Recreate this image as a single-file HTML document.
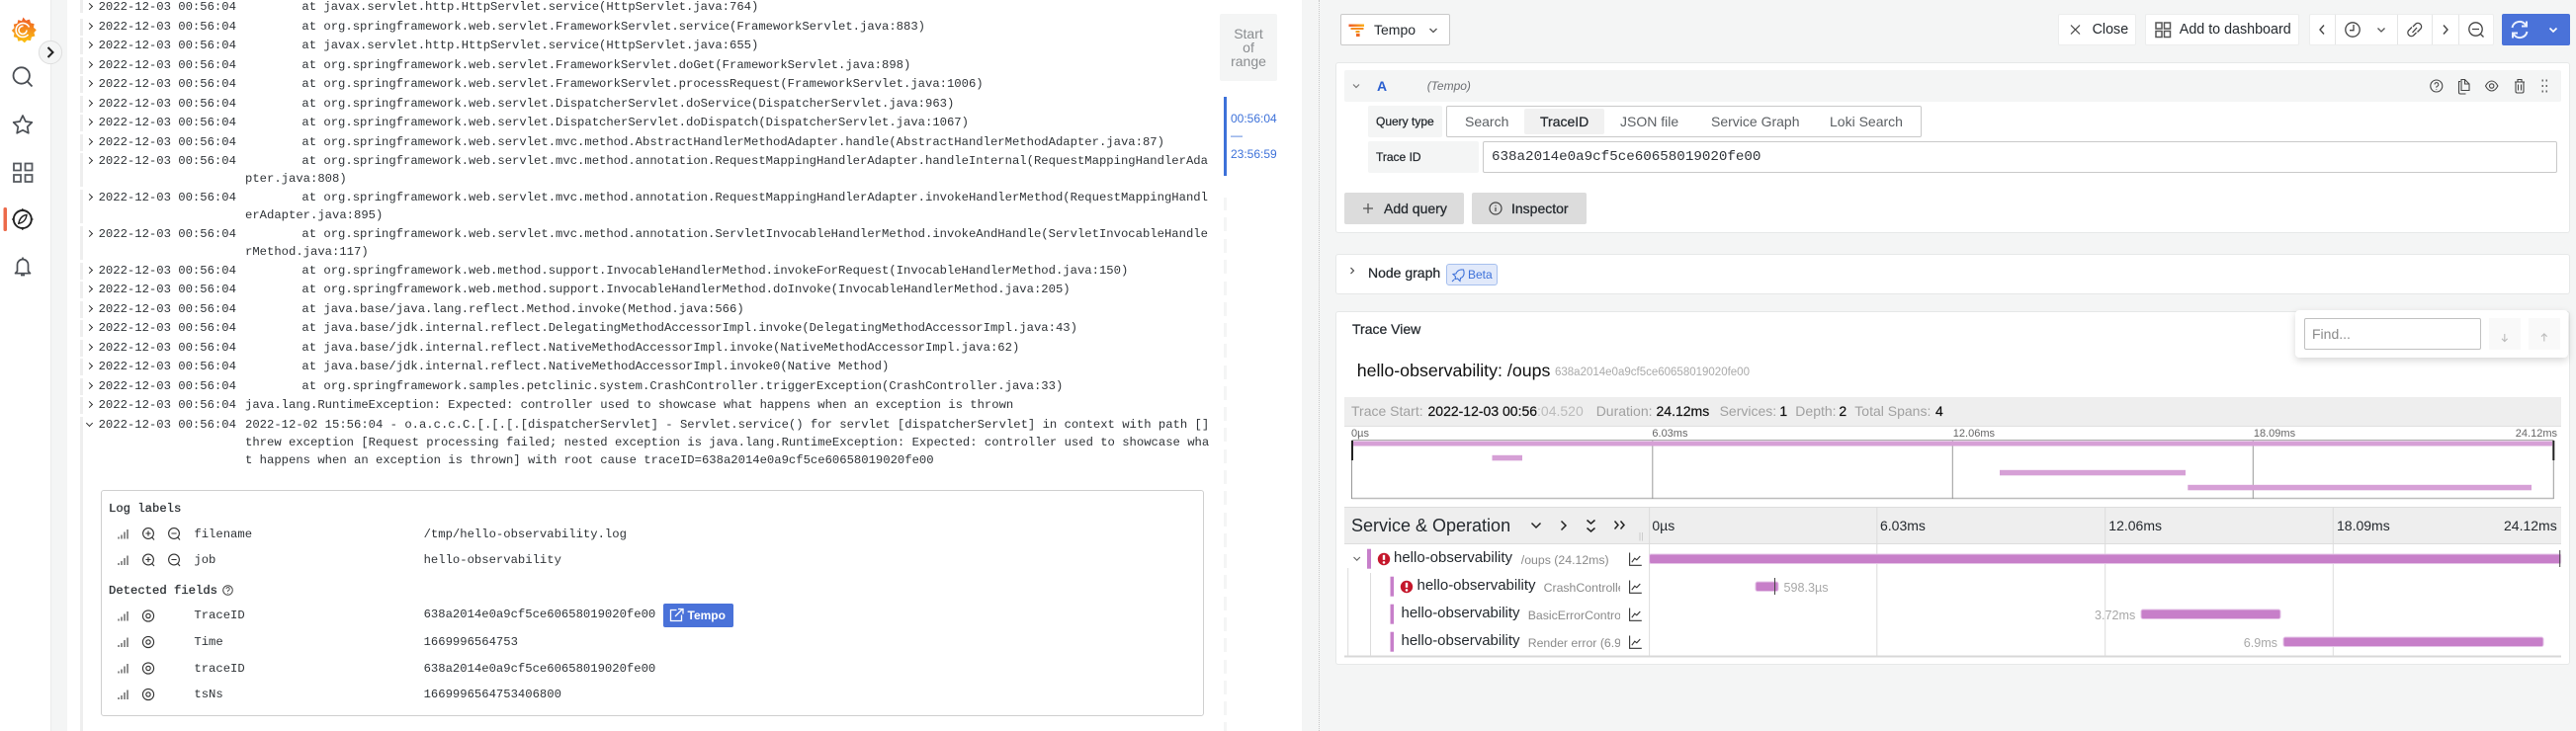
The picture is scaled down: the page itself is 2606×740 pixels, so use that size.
<!DOCTYPE html>
<html><head><meta charset="utf-8"><title>Explore</title>
<style>
html,body{margin:0;padding:0;background:#f4f5f5}
#p{position:relative;width:2606px;height:740px;overflow:hidden;background:#f4f5f5;font-family:"Liberation Sans",sans-serif;color:#24292e}
#p div{position:absolute;box-sizing:border-box}
.r{left:0;height:18px;width:1220px;font:12.22px/18px "Liberation Mono",monospace;color:#2f3337;white-space:pre}
.r span{position:absolute;top:0}
.r .bar{left:81px;top:1px;width:3px;height:17px;background:#eee}
.r .ch{left:87.5px;top:6px;width:5px;height:5px;border-top:1.3px solid #333;border-right:1.3px solid #333;transform:rotate(45deg);box-sizing:border-box}
.r .ts{left:99.6px}
.r .at{left:305.4px}
.r .m{left:248px}
.r .n{left:248px;top:18px}
.r .o{left:248px;top:36px}
.l{font:12.22px/18px "Liberation Mono",monospace;color:#2f3337;white-space:pre;height:18px}
.k{left:196.4px}.v{left:428.6px}
.h{-webkit-text-stroke:.3px #2f3337;left:110px}
.t{white-space:nowrap;line-height:20px;height:20px;font-size:14px}
.md{-webkit-text-stroke:.25px currentColor}
.g{color:#5b5f63}
.btn{background:#fff;border:1px solid #eceded;border-radius:2px;top:14px;height:32px}
.pan{background:#fff;border:1px solid #e6e8e8;border-radius:3px;left:1351px;width:1249px}
.lab{background:#f4f5f5;border-radius:2px;top:107px;height:32px}
.sn{color:#24292e;font-size:15px}
.op{color:#8a8a8a;font-size:12.3px;overflow:hidden;width:auto}
.st{color:#a0a0a0}
.sv{color:#111;-webkit-text-stroke:.2px #111}
.tk{color:#666;font-size:11px}
.tl{color:#24292e;font-size:14px}
.du{color:#a8a8a8;font-size:12.6px}
svg{position:absolute;left:0;top:0}
</style></head><body><div id="p">
<div style="left:0;top:0;width:51px;height:740px;background:#fff"></div>
<div style="left:51px;top:0;width:17px;height:740px;background:#f4f5f5;border-left:1px solid #eaebeb"></div>
<div style="left:68px;top:0;width:1249px;height:740px;background:#fff"></div>
<div style="left:1334px;top:0;width:1px;height:740px;border-left:1px dotted #c8c8c8"></div>

<!-- log rows -->
<div class="r" style="top:-2px"><span class="bar" style="top:0;height:15px"></span><span class="ch"></span><span class="ts">2022-12-03 00:56:04</span><span class="at">at javax.servlet.http.HttpServlet.service(HttpServlet.java:764)</span></div>
<div class="r" style="top:17.5px"><span class="bar"></span><span class="ch"></span><span class="ts">2022-12-03 00:56:04</span><span class="at">at org.springframework.web.servlet.FrameworkServlet.service(FrameworkServlet.java:883)</span></div>
<div class="r" style="top:37px"><span class="bar"></span><span class="ch"></span><span class="ts">2022-12-03 00:56:04</span><span class="at">at javax.servlet.http.HttpServlet.service(HttpServlet.java:655)</span></div>
<div class="r" style="top:56.5px"><span class="bar"></span><span class="ch"></span><span class="ts">2022-12-03 00:56:04</span><span class="at">at org.springframework.web.servlet.FrameworkServlet.doGet(FrameworkServlet.java:898)</span></div>
<div class="r" style="top:76px"><span class="bar"></span><span class="ch"></span><span class="ts">2022-12-03 00:56:04</span><span class="at">at org.springframework.web.servlet.FrameworkServlet.processRequest(FrameworkServlet.java:1006)</span></div>
<div class="r" style="top:95.5px"><span class="bar"></span><span class="ch"></span><span class="ts">2022-12-03 00:56:04</span><span class="at">at org.springframework.web.servlet.DispatcherServlet.doService(DispatcherServlet.java:963)</span></div>
<div class="r" style="top:115px"><span class="bar"></span><span class="ch"></span><span class="ts">2022-12-03 00:56:04</span><span class="at">at org.springframework.web.servlet.DispatcherServlet.doDispatch(DispatcherServlet.java:1067)</span></div>
<div class="r" style="top:134.5px"><span class="bar"></span><span class="ch"></span><span class="ts">2022-12-03 00:56:04</span><span class="at">at org.springframework.web.servlet.mvc.method.AbstractHandlerMethodAdapter.handle(AbstractHandlerMethodAdapter.java:87)</span></div>
<div class="r" style="top:154px"><span class="bar" style="height:34px"></span><span class="ch"></span><span class="ts">2022-12-03 00:56:04</span><span class="at">at org.springframework.web.servlet.mvc.method.annotation.RequestMappingHandlerAdapter.handleInternal(RequestMappingHandlerAda</span><span class="n">pter.java:808)</span></div>
<div class="r" style="top:191px"><span class="bar" style="height:34px"></span><span class="ch"></span><span class="ts">2022-12-03 00:56:04</span><span class="at">at org.springframework.web.servlet.mvc.method.annotation.RequestMappingHandlerAdapter.invokeHandlerMethod(RequestMappingHandl</span><span class="n">erAdapter.java:895)</span></div>
<div class="r" style="top:228px"><span class="bar" style="height:34px"></span><span class="ch"></span><span class="ts">2022-12-03 00:56:04</span><span class="at">at org.springframework.web.servlet.mvc.method.annotation.ServletInvocableHandlerMethod.invokeAndHandle(ServletInvocableHandle</span><span class="n">rMethod.java:117)</span></div>
<div class="r" style="top:264.7px"><span class="bar"></span><span class="ch"></span><span class="ts">2022-12-03 00:56:04</span><span class="at">at org.springframework.web.method.support.InvocableHandlerMethod.invokeForRequest(InvocableHandlerMethod.java:150)</span></div>
<div class="r" style="top:284.2px"><span class="bar"></span><span class="ch"></span><span class="ts">2022-12-03 00:56:04</span><span class="at">at org.springframework.web.method.support.InvocableHandlerMethod.doInvoke(InvocableHandlerMethod.java:205)</span></div>
<div class="r" style="top:303.7px"><span class="bar"></span><span class="ch"></span><span class="ts">2022-12-03 00:56:04</span><span class="at">at java.base/java.lang.reflect.Method.invoke(Method.java:566)</span></div>
<div class="r" style="top:323.2px"><span class="bar"></span><span class="ch"></span><span class="ts">2022-12-03 00:56:04</span><span class="at">at java.base/jdk.internal.reflect.DelegatingMethodAccessorImpl.invoke(DelegatingMethodAccessorImpl.java:43)</span></div>
<div class="r" style="top:342.7px"><span class="bar"></span><span class="ch"></span><span class="ts">2022-12-03 00:56:04</span><span class="at">at java.base/jdk.internal.reflect.NativeMethodAccessorImpl.invoke(NativeMethodAccessorImpl.java:62)</span></div>
<div class="r" style="top:362.2px"><span class="bar"></span><span class="ch"></span><span class="ts">2022-12-03 00:56:04</span><span class="at">at java.base/jdk.internal.reflect.NativeMethodAccessorImpl.invoke0(Native Method)</span></div>
<div class="r" style="top:381.7px"><span class="bar"></span><span class="ch"></span><span class="ts">2022-12-03 00:56:04</span><span class="at">at org.springframework.samples.petclinic.system.CrashController.triggerException(CrashController.java:33)</span></div>
<div class="r" style="top:401.2px"><span class="bar"></span><span class="ch"></span><span class="ts">2022-12-03 00:56:04</span><span class="m">java.lang.RuntimeException: Expected: controller used to showcase what happens when an exception is thrown</span></div>
<div class="r" style="top:420.7px"><span class="bar" style="height:320px"></span><span class="ch" style="transform:rotate(135deg);left:88px;top:5px"></span><span class="ts">2022-12-03 00:56:04</span><span class="m">2022-12-02 15:56:04 - o.a.c.c.C.[.[.[.[dispatcherServlet] - Servlet.service() for servlet [dispatcherServlet] in context with path []</span><span class="n">threw exception [Request processing failed; nested exception is java.lang.RuntimeException: Expected: controller used to showcase wha</span><span class="o">t happens when an exception is thrown] with root cause traceID=638a2014e0a9cf5ce60658019020fe00</span></div>

<!-- log detail box -->
<div style="left:101.5px;top:495.5px;width:1116px;height:229px;border:1.5px solid #cfcfcf;border-radius:3px;background:#fff"></div>
<div class="l h" style="top:505.5px">Log labels</div>
<div class="l k" style="top:531.5px">filename</div><div class="l v" style="top:531.5px">/tmp/hello-observability.log</div>
<div class="l k" style="top:558px">job</div><div class="l v" style="top:558px">hello-observability</div>
<div class="l h" style="top:588.5px">Detected fields</div>
<div class="l k" style="top:614px">TraceID</div><div class="l v" style="top:612.5px">638a2014e0a9cf5ce60658019020fe00</div>
<div class="l k" style="top:641px">Time</div><div class="l v" style="top:641px">1669996564753</div>
<div class="l k" style="top:667.5px">traceID</div><div class="l v" style="top:667.5px">638a2014e0a9cf5ce60658019020fe00</div>
<div class="l k" style="top:694px">tsNs</div><div class="l v" style="top:694px">1669996564753406800</div>
<div style="left:671px;top:611px;width:71px;height:24px;background:#4a72d9;border-radius:2px"></div>
<div class="t" style="left:695.5px;top:613px;color:#fff;font-size:12px;font-weight:bold">Tempo</div>

<!-- range -->
<div style="left:1234px;top:14px;width:58px;height:68px;background:#f4f5f5;border-radius:2px"></div>
<div class="t g" style="left:1234px;width:58px;text-align:center;top:24px;color:#8a8d90">Start</div>
<div class="t g" style="left:1234px;width:58px;text-align:center;top:38px;color:#8a8d90">of</div>
<div class="t g" style="left:1234px;width:58px;text-align:center;top:52px;color:#8a8d90">range</div>
<div style="left:1238px;top:98px;width:3px;height:80px;background:#3d71d9"></div>
<div class="t" style="left:1245px;top:110px;font-size:12px;color:#3d71d9">00:56:04</div>
<div class="t" style="left:1245px;top:127px;font-size:12px;color:#3d71d9">—</div>
<div class="t" style="left:1245px;top:146px;font-size:12px;color:#3d71d9">23:56:59</div>

<!-- right toolbar -->
<div class="btn" style="left:1355.5px;width:111px;border-color:#c9c9c9"></div>
<div class="t" style="left:1390px;top:20px">Tempo</div>
<div class="btn" style="left:2082px;width:79px"></div>
<div class="t" style="left:2116.6px;top:20px;font-size:14.3px">Close</div>
<div class="btn" style="left:2170px;width:156px"></div>
<div class="t" style="left:2204.8px;top:20px;font-size:14.3px">Add to dashboard</div>
<div class="btn" style="left:2335.5px;width:187px"></div>
<div style="left:2531px;top:14px;width:69px;height:32px;background:#4a72d9;border-radius:2px"></div>

<!-- query panel -->
<div class="pan" style="top:62.5px;height:173px"></div>
<div style="left:1360px;top:71px;width:1231px;height:32px;background:#f4f5f5;border-radius:2px"></div>
<div class="t" style="left:1393px;top:77px;color:#2a5fd0;font-weight:bold">A</div>
<div class="t" style="left:1443.7px;top:77px;font-size:12px;font-style:italic;color:#6c6f73">(Tempo)</div>
<div class="lab" style="left:1384px;width:75px"></div>
<div class="t md" style="left:1392px;top:113px;font-size:12px">Query type</div>
<div style="left:1463px;top:107px;width:481px;height:32px;border:1px solid #c9c9c9;border-radius:2px;background:#fff"></div>
<div style="left:1542px;top:110px;width:81px;height:26px;background:#f1f1f1;border-radius:2px"></div>
<div class="t g" style="left:1482px;top:113px">Search</div>
<div class="t md" style="left:1558px;top:113px">TraceID</div>
<div class="t g" style="left:1639px;top:113px">JSON file</div>
<div class="t g" style="left:1731px;top:113px">Service Graph</div>
<div class="t g" style="left:1851px;top:113px">Loki Search</div>
<div class="lab" style="left:1384px;width:112px;top:143px"></div>
<div class="t md" style="left:1392px;top:149px;font-size:12px">Trace ID</div>
<div style="left:1500px;top:143px;width:1087px;height:32px;border:1px solid #c9c9c9;border-radius:2px;background:#fff"></div>
<div class="t" style="left:1509px;top:149px;font:14.2px/20px 'Liberation Mono',monospace;color:#2f3337">638a2014e0a9cf5ce60658019020fe00</div>
<div style="left:1360px;top:195px;width:121px;height:32px;background:#dcdcdc;border-radius:2px"></div>
<div class="t md" style="left:1400px;top:201px">Add query</div>
<div style="left:1489px;top:195px;width:116px;height:32px;background:#dcdcdc;border-radius:2px"></div>
<div class="t md" style="left:1529px;top:201px">Inspector</div>

<!-- node graph -->
<div class="pan" style="top:257px;height:40.5px"></div>
<div class="t md" style="left:1384px;top:266px">Node graph</div>
<div style="left:1462.5px;top:267px;width:52px;height:22px;background:#e1e9fa;border:1px solid #a6bfee;border-radius:3px"></div>
<div class="t" style="left:1485px;top:268px;font-size:12px;color:#3d71d9">Beta</div>

<!-- trace view -->
<div class="pan" style="top:314.5px;height:358px"></div>
<div class="t md" style="left:1368px;top:323px">Trace View</div>
<div class="t" style="left:1372.7px;top:365px;font-size:17.8px;color:#111">hello-observability: /oups</div>
<div class="t" style="left:1573px;top:367px;font-size:11.5px;color:#aaa">638a2014e0a9cf5ce60658019020fe00</div>
<div style="left:1360px;top:402px;width:1231px;height:29.5px;background:#eee;border-bottom:1px solid #e0e0e0"></div>
<div class="t st" style="left:1367px;top:406px">Trace Start:</div>
<div class="t sv" style="left:1444.5px;top:406px">2022-12-03 00:56<span style="color:#bbb;-webkit-text-stroke:0">:04.520</span></div>
<div class="t st" style="left:1614.7px;top:406px">Duration:</div>
<div class="t sv" style="left:1675.5px;top:406px">24.12ms</div>
<div class="t st" style="left:1739.6px;top:406px">Services:</div>
<div class="t sv" style="left:1800.4px;top:406px">1</div>
<div class="t st" style="left:1816.3px;top:406px">Depth:</div>
<div class="t sv" style="left:1860.4px;top:406px">2</div>
<div class="t st" style="left:1876.3px;top:406px">Total Spans:</div>
<div class="t sv" style="left:1958px;top:406px">4</div>
<div class="t tk" style="left:1367px;top:429px">0µs</div>
<div class="t tk" style="left:1671.4px;top:429px">6.03ms</div>
<div class="t tk" style="left:1975.8px;top:429px">12.06ms</div>
<div class="t tk" style="left:2279.9px;top:429px">18.09ms</div>
<div class="t tk" style="left:2544.8px;top:429px">24.12ms</div>
<div style="left:1360px;top:512.5px;width:1231px;height:38.5px;background:#eee;border-top:1.5px solid #ddd;border-bottom:1.5px solid #ddd"></div>
<div class="t" style="left:1367px;top:522px;font-size:18px;color:#24292e">Service &amp; Operation</div>
<div class="t tl" style="left:1671.4px;top:522px">0µs</div>
<div class="t tl" style="left:1902px;top:522px">6.03ms</div>
<div class="t tl" style="left:2133.3px;top:522px">12.06ms</div>
<div class="t tl" style="left:2364px;top:522px">18.09ms</div>
<div class="t tl" style="left:2533px;top:522px">24.12ms</div>

<div class="t sn" style="left:1410px;top:555px">hello-observability</div>
<div class="t op" style="left:1538.8px;top:556.5px;width:100px">/oups (24.12ms)</div>
<div class="t sn" style="left:1433.5px;top:583px">hello-observability</div>
<div class="t op" style="left:1561.6px;top:584.5px;width:77px">CrashController.triggerException</div>
<div class="t sn" style="left:1417.5px;top:611px">hello-observability</div>
<div class="t op" style="left:1545.7px;top:612.5px;width:93px">BasicErrorController.error</div>
<div class="t sn" style="left:1417.5px;top:639px">hello-observability</div>
<div class="t op" style="left:1545.7px;top:640.5px;width:93px">Render error (6.9ms)</div>
<div class="t du" style="left:1804.5px;top:585px">598.3µs</div>
<div class="t du" style="left:2119px;top:613px">3.72ms</div>
<div class="t du" style="left:2269.7px;top:641px">6.9ms</div>

<!-- find -->
<div style="left:2322px;top:314px;width:276px;height:48px;background:#fff;border-radius:4px;box-shadow:0 3px 8px rgba(0,0,0,.16)"></div>
<div style="left:2330.5px;top:322px;width:179px;height:31.5px;background:#fff;border:1px solid #c0c0c0;border-radius:2px"></div>
<div class="t" style="left:2339px;top:327.5px;color:#8a8a8a">Find...</div>
<div style="left:2518px;top:322px;width:32px;height:32px;background:#f9f9f9"></div>
<div style="left:2558px;top:322px;width:32px;height:32px;background:#f9f9f9"></div>

<svg width="2606" height="740" viewBox="0 0 2606 740" fill="none">
<defs>
<linearGradient id="gl" x1="0" y1="0" x2="0" y2="1"><stop offset="0" stop-color="#ef5a28"/><stop offset="1" stop-color="#fbc40f"/></linearGradient>
<linearGradient id="tg" x1="0" y1="0" x2="1" y2="0"><stop offset="0" stop-color="#ef5a28"/><stop offset="1" stop-color="#fbb01a"/></linearGradient>
<g id="st"><path d="M-4.5 4.5v-2M-1.5 4.5v-4M1.5 4.5v-7M4.5 4.5v-9.5" stroke="#555" stroke-width="1.3"/></g>
<g id="zi"><circle cx="0" cy="-.5" r="5.4" stroke="#333" stroke-width="1.1"/><path d="M3.8 3.5l2.2 2.5M-2.6-.5h5.2M0-3.1v5.2" stroke="#333" stroke-width="1.1"/></g>
<g id="zo"><circle cx="0" cy="-.5" r="5.4" stroke="#333" stroke-width="1.1"/><path d="M3.8 3.5l2.2 2.5M-2.6-.5h5.2" stroke="#333" stroke-width="1.1"/></g>
<g id="ey"><circle r="5.6" stroke="#333" stroke-width="1.1"/><circle r="2.2" stroke="#333" stroke-width="1.1"/></g>
<g id="sp"><path d="M-5.7-6.5V6.3H6.5" stroke="#333" stroke-width="1.1"/><path d="M-3.5 3.2L-.5-.8L1.5.8L5-3" stroke="#333" stroke-width="1.1"/></g>
<g id="er"><circle r="6.2" fill="#c4162a"/><path d="M0-4.2V.8" stroke="#fff" stroke-width="2.4"/><circle cy="3.4" r="1.3" fill="#fff"/></g>
</defs>

<!-- sidebar -->
<path d="M23.5 17.5l2.6 3.3 3.9-1.2 1 3.7 3.6.8-.6 3.8 2.8 2.4-2.4 2.8 1 3.4-3.5 1-.9 3.6-3.6-.5-2.6 2.8-2.8-2.5-3.6.9-1-3.5-3.6-1.1.7-3.600-2.700-2.700 2.700-2.600-.7-3.700 3.700-.9.900-3.600 3.600 1.100z" fill="url(#gl)"/>
<path d="M29.500 27.500a7 7 0 1 0-1 7.500M27 30.500a4 4 0 1 1-3.500-4" stroke="#fff" stroke-width="1.6" fill="none"/>
<circle cx="51" cy="53" r="11.6" fill="#f4f5f5" stroke="#dedede"/>
<path d="M48.5 48l5 5-5 5" stroke="#222" stroke-width="2"/>
<circle cx="21.7" cy="76.5" r="8.2" stroke="#4a4e54" stroke-width="1.8"/><path d="M27.7 82.5l4.8 5" stroke="#4a4e54" stroke-width="1.8"/>
<path d="M23 117l2.9 6 6.4.9-4.6 4.5 1.1 6.4-5.8-3-5.8 3 1.1-6.4-4.6-4.5 6.4-.9z" stroke="#4a4e54" stroke-width="1.7" stroke-linejoin="round"/>
<path d="M14 165.500h7v7h-7zM25.500 165.500h7v7h-7zM14 177h7v7h-7zM25.500 177h7v7h-7z" stroke="#55595f" stroke-width="1.8"/>
<rect x="3.5" y="210" width="3.5" height="24" rx="1.5" fill="#ec6a4a"/>
<circle cx="22.8" cy="222" r="9" stroke="#222" stroke-width="1.9"/>
<path d="M27 217.500c-4 .5-7 3-8.200 8.800c4.600-.9 7.400-3.200 8.200-8.800z" stroke="#222" stroke-width="1.4"/>
<path d="M22.800 211v2M22.800 231v2M12 222h2M31.500 222h2" stroke="#222" stroke-width="1.2"/>
<path d="M17.500 274.500v-6.500a5.500 5.500 0 0 1 11 0v6.500l2 2.200h-15z" stroke="#4a4e54" stroke-width="1.7" stroke-linejoin="round"/><path d="M23 260.500v2M21 278.500h4" stroke="#4a4e54" stroke-width="1.7"/>

<!-- log dashed -->
<path d="M1239.500 200v13M1239.500 220v14M1239.500 242v14M1239.500 263v14M1239.500 285v14M1239.500 306v14M1239.500 327v14M1239.500 348v14M1239.500 370v14M1239.500 391v14M1239.500 412v14M1239.500 433v14M1239.500 455v14M1239.500 476v14M1239.500 497v14M1239.500 519v14M1239.500 540v14M1239.500 561v14M1239.500 582v14M1239.500 604v14M1239.500 625v14M1239.500 646v14M1239.500 668v14M1239.500 689v14M1239.500 710v14M1239.500 731v9" stroke="#f4f5f5" stroke-width="3"/>

<!-- log details icons -->
<use href="#st" x="124.5" y="541"/><use href="#zi" x="150" y="540.5"/><use href="#zo" x="176" y="540.5"/>
<use href="#st" x="124.5" y="567.5"/><use href="#zi" x="150" y="567"/><use href="#zo" x="176" y="567"/>
<circle cx="230.5" cy="597.500" r="4.8" stroke="#444" stroke-width="1"/><path d="M229 596.200a1.600 1.600 0 1 1 2 1.500l-.5.6v.7M230.500 600v.6" stroke="#444" stroke-width=".9"/>
<use href="#st" x="124.5" y="624"/><use href="#ey" x="150" y="623.5"/>
<use href="#st" x="124.5" y="650.5"/><use href="#ey" x="150" y="650"/>
<use href="#st" x="124.5" y="677"/><use href="#ey" x="150" y="676.5"/>
<use href="#st" x="124.5" y="703.5"/><use href="#ey" x="150" y="703"/>
<path d="M684.500 617.500h-6v11h11v-6M683 624l7.500-7.500M686 616.500h5v5" stroke="#fff" stroke-width="1.3"/>

<!-- top toolbar icons -->
<rect x="1364.500" y="24.500" width="15.500" height="2.500" fill="url(#tg)"/><rect x="1366.500" y="28" width="13" height="2" fill="#f68c20"/><rect x="1371.500" y="31" width="4" height="2.200" fill="#f4a01e"/><rect x="1372" y="34" width="3.600" height="3" fill="#ee6a26"/>
<path d="M1446.500 29l3.500 3.500 3.500-3.500" stroke="#555" stroke-width="1.3"/>
<path d="M2095 25.500l9 9M2104 25.500l-9 9" stroke="#444" stroke-width="1.2"/>
<path d="M2181 23h6v6h-6zM2189.500 23h6v6h-6zM2181 31.500h6v6h-6zM2189.500 31.500h6v6h-6z" stroke="#555" stroke-width="1.5"/>
<path d="M2362.500 15v30M2425.500 15v30M2460.500 15v30M2487.500 15v30" stroke="#e4e5e5" stroke-width="1"/>
<path d="M2351 25.500l-4 4.500 4 4.500M2472 25.500l4 4.500-4 4.500" stroke="#444" stroke-width="1.4"/>
<circle cx="2380" cy="30" r="7.200" stroke="#444" stroke-width="1.300"/><path d="M2381 25v5.700h-4" stroke="#444" stroke-width="1.300"/>
<path d="M2405.500 28.500l3.500 3.500 3.500-3.500" stroke="#555" stroke-width="1.300"/>
<path d="M2441 27l3-3a3.600 3.600 0 0 1 5 5l-3.500 3.500M2444.500 33l-3 3a3.600 3.600 0 0 1-5-5l3.500-3.500M2440.500 33l4.500-5" stroke="#444" stroke-width="1.300"/>
<circle cx="2504.500" cy="29.500" r="6.700" stroke="#444" stroke-width="1.300"/><path d="M2509.500 34.500l3 3M2501 29.500h7" stroke="#444" stroke-width="1.300"/>
<path d="M2541.500 28a7.500 7.500 0 0 1 13-3.500l1.500 1.500M2556 21.500v5h-5M2556.500 32a7.500 7.500 0 0 1-13 3.500l-1.500-1.500M2542 38.500v-5h5" stroke="#eaf0ff" stroke-width="2"/>
<path d="M2579.500 28.500l3.500 3.500 3.500-3.500" stroke="#fff" stroke-width="1.600"/>

<!-- query row -->
<path d="M1369 85.500l3 3 3-3" stroke="#777" stroke-width="1.200"/>
<circle cx="2464.800" cy="87" r="6" stroke="#444" stroke-width="1.100"/><path d="M2463 85.500a1.900 1.900 0 1 1 2.500 1.800l-.7.7v.8M2464.800 90v.8" stroke="#444" stroke-width="1"/>
<path d="M2489 82.500h-1.500v11a1.500 1.500 0 0 0 1.500 1.500h5.500M2490 80.500h3.500l4.500 4.500v6.500h-8zM2493.500 80.500v4.500h4.500" stroke="#444" stroke-width="1.100"/>
<path d="M2514.500 87c2-3.800 4-5 6.200-5s4.200 1.200 6.200 5c-2 3.800-4 5-6.200 5s-4.200-1.200-6.200-5z" stroke="#444" stroke-width="1.100"/><circle cx="2520.700" cy="87" r="2.200" stroke="#444" stroke-width="1.100"/>
<path d="M2544 83h10M2545 83v9.500a1.500 1.500 0 0 0 1.500 1.500h5a1.500 1.500 0 0 0 1.500-1.500v-9.500M2547 83v-2.500h4v2.500M2547.500 85.500v6M2550.500 85.500v6" stroke="#444" stroke-width="1.100"/>
<path d="M2571.500 81.500h1.500M2575.500 81.500h1.500M2571.500 87h1.500M2575.500 87h1.500M2571.500 92.500h1.500M2575.500 92.500h1.500" stroke="#666" stroke-width="2"/>
<path d="M1384 206v10M1379 211h10" stroke="#555" stroke-width="1.300"/>
<circle cx="1513" cy="211" r="6" stroke="#444" stroke-width="1.200"/><path d="M1513 210v4M1513 207.800v1" stroke="#444" stroke-width="1.200"/>
<path d="M1366.500 271l3 3-3 3" stroke="#444" stroke-width="1.100"/>
<path d="M1480 273c-3-.5-6 1-7 4l-3 .5 2.500 2.500-.5 2.500 2.500-.5 2.500 2.500.5-3c3-1 4.500-4 3-8.500zM1469 285l2-2" stroke="#3d71d9" stroke-width="1.100"/>

<!-- minimap -->
<rect x="1367.500" y="446" width="1216" height="58.500" fill="#fff"/>
<path d="M1367.500 445.500h1216" stroke="#aaa"/>
<path d="M1367.500 504.500h1216" stroke="#bdbdbd" stroke-width="1.600"/>
<path d="M1367.500 446v59M1671.800 446v59M1975.300 446v59M2279.300 446v59M2583.300 446v59" stroke="#999"/>
<g fill="#d6a0d6"><rect x="1368" y="446.500" width="1214" height="5"/><rect x="1509.500" y="460.800" width="30.500" height="5.500"/><rect x="2023" y="475.800" width="188" height="5.500"/><rect x="2213.300" y="490.800" width="347.700" height="5.500"/></g>
<rect x="1367" y="446" width="2" height="20" fill="#222"/><rect x="2582.300" y="446" width="2" height="20" fill="#222"/>

<!-- timeline header icons -->
<path d="M1549.500 529.500l4.500 4.500 4.500-4.500M1579.500 527.500l4.500 4.500-4.500 4.500M1605.500 526.500l4 3.500 4-3.500M1605.500 534.500l4 3.500 4-3.500M1633.500 527.500l3.500 4-3.500 4M1639.500 527.500l3.500 4-3.500 4" stroke="#222" stroke-width="1.500"/>
<path d="M1659 539v8.500M1661.500 539v8.500" stroke="#ccc"/>

<!-- timeline grid -->
<path d="M1668.600 513v151M1898.800 513v151M2129.700 513v151M2360.300 513v151" stroke="#dcdcdc"/>
<path d="M1360 664.500h1231" stroke="#d8d8d8" stroke-width="2"/>
<path d="M1363.700 575v89M1386.500 580v84" stroke="#dcdcdc"/>
<path d="M1369.500 564l3.200 3.200 3.200-3.200" stroke="#666" stroke-width="1.100"/>
<g fill="#c77fca"><rect x="1383" y="555.700" width="4" height="20"/><rect x="1406.500" y="583.700" width="3.500" height="20"/><rect x="1406.500" y="611.700" width="3.500" height="20"/><rect x="1406.500" y="639.700" width="3.500" height="20"/></g>
<use href="#er" x="1400" y="566"/><use href="#er" x="1423" y="594"/>
<use href="#sp" x="1654.300" y="566"/><use href="#sp" x="1654.300" y="594"/><use href="#sp" x="1654.300" y="622"/><use href="#sp" x="1654.300" y="650"/>
<g fill="#c77fc9" stroke="#e6c6e8" stroke-width="1"><rect x="1668.600" y="561" width="922" height="9.500" rx="1.500"/><rect x="1776" y="589" width="23" height="9.500" rx="2"/><rect x="2166" y="617" width="141" height="9.500" rx="2"/><rect x="2310" y="645" width="263" height="9.500" rx="2"/></g>
<path d="M2589.700 557v17M1795.500 585v17" stroke="#444"/>

<!-- find arrows -->
<path d="M2533.800 338v7.500M2531 342.800l2.800 2.800 2.800-2.800M2573.800 345.500v-7.500M2571 340.700l2.800-2.800 2.800 2.800" stroke="#bbb" stroke-width="1.100"/>
</svg>
</div></body></html>
